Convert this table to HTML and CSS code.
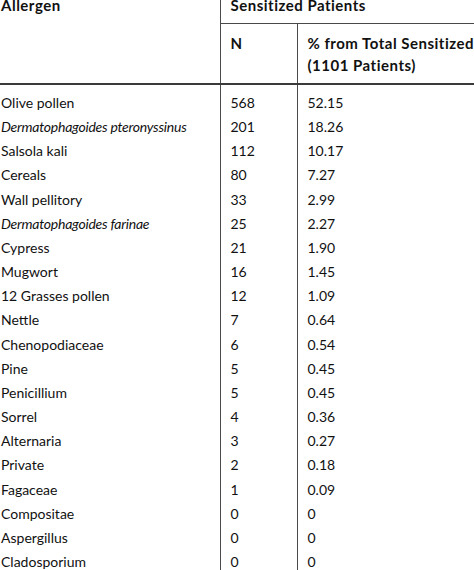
FILE: index.html
```html
<!DOCTYPE html>
<html>
<head>
<meta charset="utf-8">
<link rel="stylesheet" href="styles.css">
</head>
<body>
<table class="tbl">
  <colgroup>
    <col class="c1"><col class="c2"><col class="c3">
  </colgroup>
  <thead>
    <tr class="h1">
      <th rowspan="2" class="allergen">Allergen</th>
      <th colspan="2" class="group">Sensitized Patients</th>
    </tr>
    <tr class="h2">
      <th class="n">N</th>
      <th class="pct">% from Total Sensitized<br>(1101 Patients)</th>
    </tr>
  </thead>
  <tbody>
    <tr class="first"><td>Olive pollen</td><td>568</td><td>52.15</td></tr>
    <tr><td><i class="sp">Dermatophagoides pteronyssinus</i></td><td>201</td><td>18.26</td></tr>
    <tr><td>Salsola kali</td><td>112</td><td>10.17</td></tr>
    <tr><td>Cereals</td><td>80</td><td>7.27</td></tr>
    <tr><td>Wall pellitory</td><td>33</td><td>2.99</td></tr>
    <tr><td><i class="sp">Dermatophagoides farinae</i></td><td>25</td><td>2.27</td></tr>
    <tr><td>Cypress</td><td>21</td><td>1.90</td></tr>
    <tr><td>Mugwort</td><td>16</td><td>1.45</td></tr>
    <tr><td>12 Grasses pollen</td><td>12</td><td>1.09</td></tr>
    <tr><td>Nettle</td><td>7</td><td>0.64</td></tr>
    <tr><td>Chenopodiaceae</td><td>6</td><td>0.54</td></tr>
    <tr><td>Pine</td><td>5</td><td>0.45</td></tr>
    <tr><td>Penicillium</td><td>5</td><td>0.45</td></tr>
    <tr><td>Sorrel</td><td>4</td><td>0.36</td></tr>
    <tr><td>Alternaria</td><td>3</td><td>0.27</td></tr>
    <tr><td>Private</td><td>2</td><td>0.18</td></tr>
    <tr><td>Fagaceae</td><td>1</td><td>0.09</td></tr>
    <tr><td>Compositae</td><td>0</td><td>0</td></tr>
    <tr><td>Aspergillus</td><td>0</td><td>0</td></tr>
    <tr><td>Cladosporium</td><td>0</td><td>0</td></tr>
  </tbody>
</table>
</body>
</html>
```
FILE: styles.css
```css
html, body {
  margin: 0;
  padding: 0;
  background: #ffffff;
}
body {
  font-family: "Lato", "DejaVu Sans", sans-serif;
  font-size: 14px;
  color: #111111;
  overflow: hidden;
}
.tbl {
  border-collapse: collapse;
  table-layout: fixed;
  width: 474px;
  margin-top: -6px;
}
.c1 { width: 220px; }
.c2 { width: 77px; }
.c3 { width: 177px; }
.tbl th {
  font-weight: 700;
  font-size: 15px;
  letter-spacing: 0.5px;
  text-align: left;
  vertical-align: top;
  line-height: 22px;
  padding: 0;
}
.allergen {
  padding-left: 1px !important;
  border-right: 1.5px solid #4a4a4a;
  border-bottom: 2px solid #3a3a3a;
}
.group {
  padding: 0 0 7px 10px !important;
  border-bottom: 1.5px solid #4a4a4a;
}
.h2 th {
  padding-top: 8px;
  padding-bottom: 7px;
  border-bottom: 2px solid #3a3a3a;
}
.n {
  padding-left: 10px !important;
  border-right: 1.5px solid #4a4a4a;
}
.pct {
  padding-left: 10px !important;
  white-space: nowrap;
}
.tbl td {
  line-height: 24.15px;
  padding: 0 0 0 10px;
  vertical-align: top;
  white-space: nowrap;
}
.tbl td:first-child {
  padding-left: 1px;
  border-right: 1.5px solid #4a4a4a;
}
.tbl td:nth-child(2) {
  border-right: 1.5px solid #4a4a4a;
}
.tbl tr.first td {
  padding-top: 6px;
}
.sp {
  letter-spacing: -0.25px;
}
```
